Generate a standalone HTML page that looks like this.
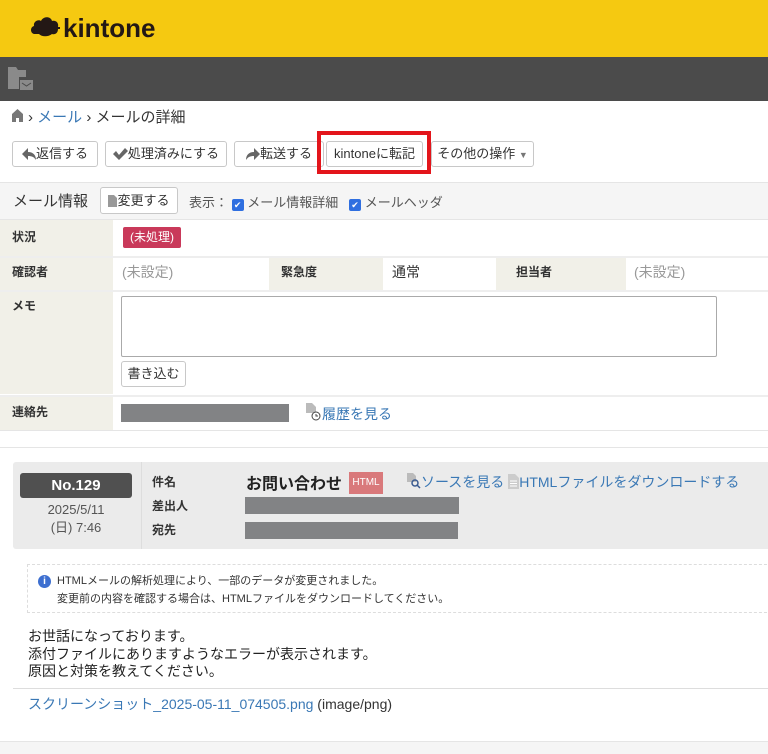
<!DOCTYPE html>
<html><head><meta charset="utf-8"><style>
*{box-sizing:border-box;margin:0;padding:0}
body{width:768px;height:754px;overflow:hidden;background:#fff;font-family:"Liberation Sans","Noto Sans CJK JP",sans-serif;color:#333;font-size:13px;position:relative}
.a{position:absolute}
.btn{position:absolute;height:26px;border:1px solid #c8c8c8;border-radius:3px;background:#fff;font-size:13px;line-height:24px;text-align:center;color:#333;white-space:nowrap}
.lbl{position:absolute;background:#f1f0e8;font-size:12px;font-weight:bold;color:#333}
.gray{position:absolute;background:#828385}
.lk{color:#3a78b5}
svg.i{display:inline-block;vertical-align:-2px}
</style></head><body>
<div class="a" style="left:0;top:0;width:768px;height:57px;background:#f5c911"></div>
<svg class="a" style="left:30px;top:16px" width="30" height="22" viewBox="0 0 30 22"><path d="M4 18 C0 17 0 11 4 10 C3 5 9 3 11 5 C13 0 21 0 22 5 C26 4 29 7 28 11 L30 11 L30 13 L28 13 C28 17 25 19 22 18 C18 21 12 21 9 18 Z" fill="#231815"/></svg>
<div class="a" style="left:63px;top:13px;font-size:26px;font-weight:bold;color:#231815">kintone</div>
<div class="a" style="left:0;top:57px;width:768px;height:44px;background:#4b4b4b"></div>
<svg class="a" style="left:8px;top:67px" width="26" height="26" viewBox="0 0 26 26"><path d="M0 0H8L10 3H18V10H11V22H0Z" fill="#8a8a8a"/><rect x="12" y="13" width="13" height="10" fill="#8a8a8a"/><path d="M14 16L18.5 19L23 16" stroke="#4b4b4b" fill="none"/></svg>
<svg class="a" style="left:12px;top:109px" width="11" height="13" viewBox="0 0 11 13"><path d="M0 5L5.5 0L11 5V13H7V9H4V13H0Z" fill="#777"/></svg>
<div class="a" style="left:28px;top:106px;font-size:15px;color:#333">› <span class="lk">メール</span> › メールの詳細</div>
<div class="btn" style="left:12px;top:141px;width:86px"><svg class="i" width="14" height="12" viewBox="0 0 14 12"><path d="M0 6L6 0V4C11 4 14 7 14 12C12 9 10 8 6 8V12Z" fill="#666"/></svg>返信する</div>
<div class="btn" style="left:105px;top:141px;width:122px"><svg class="i" width="15" height="12" viewBox="0 0 15 12"><path d="M0 6L3 3L6 7L12 0L15 3L6 12Z" fill="#666"/></svg>処理済みにする</div>
<div class="btn" style="left:234px;top:141px;width:90px"><svg class="i" width="14" height="12" viewBox="0 0 14 12"><path d="M14 6L8 0V4C3 4 0 7 0 12C2 9 4 8 8 8V12Z" fill="#666"/></svg>転送する</div>
<div class="a" style="left:317px;top:131px;width:114px;height:43px;border:4px solid #e3151b"></div>
<div class="btn" style="left:326px;top:141px;width:97px">kintoneに転記</div>
<div class="btn" style="left:431px;top:141px;width:103px">その他の操作 <span style="font-size:9px;color:#777">▼</span></div>
<div class="a" style="left:0;top:182px;width:768px;height:38px;background:#f5f5f5;border-top:1px solid #e5e5e5;border-bottom:1px solid #e5e5e5"></div>
<div class="a" style="left:13px;top:190px;font-size:15px">メール情報</div>
<div class="btn" style="left:100px;top:187px;width:78px;height:27px;line-height:25px"><svg class="i" width="9" height="12" viewBox="0 0 9 12"><path d="M0 0H6L9 3V12H0Z" fill="#999"/></svg>変更する</div>
<div class="a" style="left:189px;top:192px;font-size:13px;color:#555">表示： <span style="display:inline-block;width:12px;height:12px;background:#2f6fe0;border-radius:2px;color:#fff;font-size:9px;line-height:12px;text-align:center;vertical-align:-1px">✔</span> メール情報詳細 &nbsp; <span style="display:inline-block;width:12px;height:12px;background:#2f6fe0;border-radius:2px;color:#fff;font-size:9px;line-height:12px;text-align:center;vertical-align:-1px">✔</span> メールヘッダ</div>
<div class="lbl" style="left:0;top:220px;width:113px;height:36px;padding:8px 12px">状況</div>
<div class="a" style="left:123px;top:227px;width:58px;height:21px;background:#c9395a;border-radius:2px;color:#fff;font-size:12px;line-height:21px;text-align:center">(未処理)</div>
<div class="a" style="left:0;top:256px;width:768px;height:2px;background:#eee"></div>
<div class="lbl" style="left:0;top:258px;width:113px;height:32px;padding:5px 12px">確認者</div>
<div class="a" style="left:122px;top:262px;font-size:14px;color:#999">(未設定)</div>
<div class="lbl" style="left:269px;top:258px;width:114px;height:32px;padding:5px 12px">緊急度</div>
<div class="a" style="left:392px;top:262px;font-size:14px">通常</div>
<div class="lbl" style="left:496px;top:258px;width:130px;height:32px;padding:5px 20px">担当者</div>
<div class="a" style="left:634px;top:262px;font-size:14px;color:#999">(未設定)</div>
<div class="a" style="left:0;top:290px;width:768px;height:2px;background:#eee"></div>
<div class="lbl" style="left:0;top:292px;width:113px;height:102px;padding:5px 12px">メモ</div>
<div class="a" style="left:121px;top:296px;width:596px;height:61px;border:1px solid #aaa;border-radius:2px"></div>
<div class="btn" style="left:121px;top:361px;width:65px;height:26px">書き込む</div>
<div class="a" style="left:0;top:395px;width:768px;height:2px;background:#eee"></div>
<div class="lbl" style="left:0;top:397px;width:113px;height:33px;padding:6px 12px">連絡先</div>
<div class="gray" style="left:121px;top:404px;width:168px;height:18px"></div>
<div class="a" style="left:306px;top:403px;font-size:14px"><svg class="i" width="16" height="18" viewBox="0 0 16 18"><path d="M0 0H6L10 4V10H0Z" fill="#bbb"/><circle cx="10" cy="13" r="4" fill="#fff" stroke="#444"/><path d="M10 11V13H12" stroke="#444" fill="none"/></svg><span class="lk">履歴を見る</span></div>
<div class="a" style="left:0;top:430px;width:768px;height:1px;background:#e5e5e5"></div>
<div class="a" style="left:0;top:447px;width:768px;height:1px;background:#e5e5e5"></div>
<div class="a" style="left:13px;top:462px;width:760px;height:87px;background:#ebebeb;border-radius:3px"></div>
<div class="a" style="left:141px;top:462px;width:1px;height:87px;background:#ddd"></div>
<div class="a" style="left:20px;top:473px;width:112px;height:25px;background:#505050;border-radius:3px;color:#fff;font-weight:bold;font-size:15px;line-height:25px;text-align:center">No.129</div>
<div class="a" style="left:20px;top:501px;width:112px;text-align:center;font-size:13px;color:#555;line-height:18px">2025/5/11<br>(日) 7:46</div>
<div class="a" style="left:152px;top:470px;font-size:12px;font-weight:bold;line-height:24px">件名<br>差出人<br>宛先</div>
<div class="a" style="left:246px;top:470px;font-size:16px;font-weight:bold;color:#222">お問い合わせ</div>
<div class="a" style="left:349px;top:472px;width:34px;height:22px;background:#d9797b;color:#fff;font-size:10px;line-height:22px;text-align:center">HTML</div>
<div class="a" style="left:407px;top:472px;font-size:14px;white-space:nowrap"><svg class="i" width="14" height="16" viewBox="0 0 14 16"><path d="M0 0H6L9 3V9H0Z" fill="#bbb"/><circle cx="8" cy="10" r="3" fill="none" stroke="#3a5a90" stroke-width="1.5"/><path d="M10 12L13 15" stroke="#3a5a90" stroke-width="1.5"/></svg><span class="lk">ソースを見る</span> <svg class="i" width="11" height="15" viewBox="0 0 11 15"><path d="M0 0H7L11 4V15H0Z" fill="#ccc"/><path d="M2 7H9M2 9.5H9M2 12H9" stroke="#fff"/></svg><span class="lk">HTMLファイルをダウンロードする</span></div>
<div class="gray" style="left:245px;top:497px;width:214px;height:17px"></div>
<div class="gray" style="left:245px;top:522px;width:213px;height:17px"></div>
<div class="a" style="left:27px;top:564px;width:760px;height:49px;border:1px dashed #ddd"></div>
<div class="a" style="left:38px;top:575px;width:13px;height:13px;border-radius:50%;background:#3d6fd0;color:#fff;font-size:10px;font-weight:bold;line-height:13px;text-align:center">i</div>
<div class="a" style="left:57px;top:572px;font-size:11px;line-height:18px;color:#333">HTMLメールの解析処理により、一部のデータが変更されました。<br>変更前の内容を確認する場合は、HTMLファイルをダウンロードしてください。</div>
<div class="a" style="left:28px;top:628px;font-size:14px;line-height:17.5px;color:#222">お世話になっております。<br>添付ファイルにありますようなエラーが表示されます。<br>原因と対策を教えてください。</div>
<div class="a" style="left:13px;top:688px;width:760px;height:1px;background:#ddd"></div>
<div class="a" style="left:28px;top:694px;font-size:14px"><span class="lk">スクリーンショット_2025-05-11_074505.png</span> (image/png)</div>
<div class="a" style="left:0;top:741px;width:768px;height:13px;background:#f5f5f5;border-top:1px solid #e5e5e5"></div>
</body></html>
